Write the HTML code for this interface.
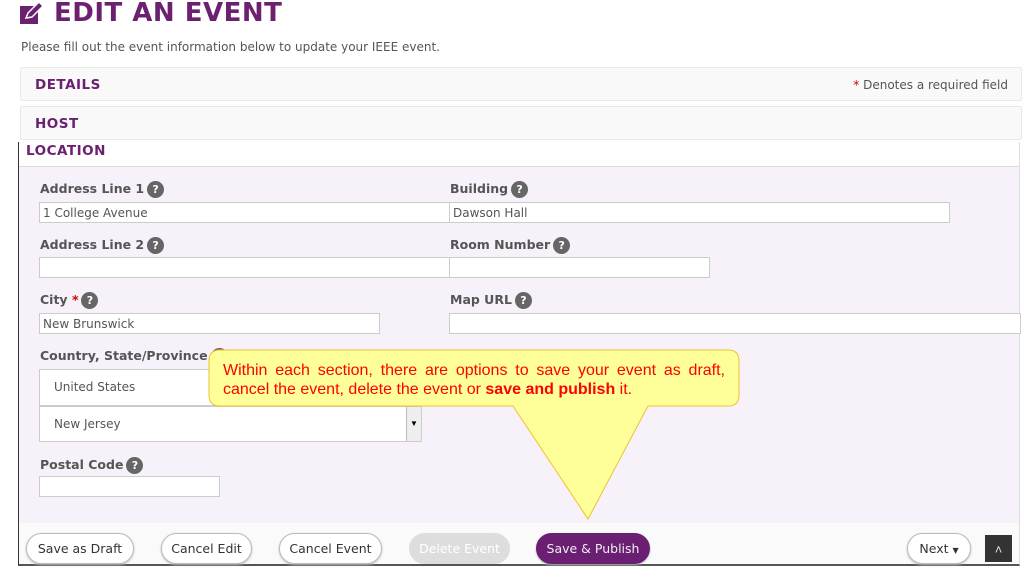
<!DOCTYPE html>
<html><head><style>
*{box-sizing:border-box;margin:0;padding:0}
body{width:1024px;height:573px;background:#fff;font-family:"Liberation Sans","DejaVu Sans",sans-serif;position:relative;overflow:hidden;color:#555}
.a{position:absolute}
.lbl{position:absolute;font-family:"DejaVu Sans",sans-serif;font-weight:bold;font-size:12.5px;color:#555;white-space:nowrap}
.q{display:inline-block;width:17px;height:17px;border-radius:50%;background:#666;color:#fff;font-size:11px;text-align:center;line-height:17px;vertical-align:middle;margin-left:3px}
.in{position:absolute;background:#fff;border:1px solid #ccc;height:21px;font-family:"DejaVu Sans",sans-serif;font-size:12px;color:#555;padding:3px 3px;white-space:nowrap}
.btn{position:absolute;top:533px;height:31px;border:1px solid #bbb;border-radius:16px;background:#fff;font-family:"DejaVu Sans",sans-serif;font-size:12.5px;color:#333;text-align:center;line-height:29px;box-shadow:0 1px 2px #bbb}
.panel{position:absolute;left:20px;width:1002px;background:#f9f9f9;border:1px solid #e8e8e8;border-radius:2px}
.ph{position:absolute;font-family:"DejaVu Sans",sans-serif;font-weight:bold;font-size:13.5px;color:#6b2070;letter-spacing:.5px}
</style></head><body>
<svg class="a" style="left:20px;top:2px" width="24" height="22" viewBox="0 0 24 22"><rect x="0" y="4" width="18" height="18" fill="#6b2070"/><path d="M6 16 L8 11 L19 0 L23 4 L12 15 Z" fill="#6b2070" stroke="#fff" stroke-width="1.5"/></svg>
<div class="a" style="left:54px;top:-2px;font-family:'DejaVu Sans',sans-serif;font-weight:bold;font-size:26px;color:#6b2070;letter-spacing:.5px">EDIT AN EVENT</div>
<div class="a" style="left:21px;top:40px;font-family:'DejaVu Sans',sans-serif;font-size:12px;color:#555">Please fill out the event information below to update your IEEE event.</div>
<div class="panel" style="top:67px;height:34px"></div>
<div class="ph" style="left:35px;top:77px">DETAILS</div>
<div class="a" style="right:16px;top:78px;font-family:'DejaVu Sans',sans-serif;font-size:12px;color:#555"><span style="color:#c00">*</span> Denotes a required field</div>
<div class="panel" style="top:106px;height:34px"></div>
<div class="ph" style="left:35px;top:116px">HOST</div>
<div class="a" style="left:18px;top:142px;width:1002px;height:424px;border-left:1px solid #333;border-bottom:2px solid #555;border-right:1px solid #ddd"></div>
<div class="a" style="left:19px;top:142px;width:1000px;height:25px;background:#fff;border-bottom:1px solid #ddd"></div>
<div class="ph" style="left:26px;top:143px">LOCATION</div>
<div class="a" style="left:19px;top:167px;width:1000px;height:356px;background:#f7f2f9"></div>
<div class="a" style="left:19px;top:523px;width:1000px;height:41px;background:#fafafa"></div>

<div class="lbl" style="left:40px;top:181px">Address Line 1<span class="q">?</span></div>
<div class="in" style="left:39px;top:202px;width:411px">1 College Avenue</div>
<div class="lbl" style="left:450px;top:181px">Building<span class="q">?</span></div>
<div class="in" style="left:449px;top:202px;width:501px">Dawson Hall</div>
<div class="lbl" style="left:40px;top:237px">Address Line 2<span class="q">?</span></div>
<div class="in" style="left:39px;top:257px;width:411px"></div>
<div class="lbl" style="left:450px;top:237px">Room Number<span class="q">?</span></div>
<div class="in" style="left:449px;top:257px;width:261px"></div>
<div class="lbl" style="left:40px;top:292px">City <span style="color:#c00">*</span><span class="q">?</span></div>
<div class="in" style="left:39px;top:313px;width:341px">New Brunswick</div>
<div class="lbl" style="left:450px;top:292px">Map URL<span class="q">?</span></div>
<div class="in" style="left:449px;top:313px;width:572px"></div>
<div class="lbl" style="left:40px;top:348px">Country, State/Province<span class="q">?</span></div>
<div class="in" style="left:39px;top:369px;width:383px;height:37px;padding:10px 14px">United States</div>
<div class="in" style="left:39px;top:406px;width:383px;height:36px;padding:10px 14px">New Jersey</div>
<div class="a" style="left:406px;top:407px;width:15px;height:34px;background:#eee;border-left:1px solid #bbb;font-size:8px;text-align:center;line-height:34px;color:#000">▼</div>
<div class="lbl" style="left:40px;top:457px">Postal Code<span class="q">?</span></div>
<div class="in" style="left:39px;top:476px;width:181px"></div>

<div class="btn" style="left:26px;width:108px">Save as Draft</div>
<div class="btn" style="left:161px;width:91px">Cancel Edit</div>
<div class="btn" style="left:279px;width:103px">Cancel Event</div>
<div class="btn" style="left:409px;width:101px;background:#ddd;border-color:#ddd;color:#fff;box-shadow:none">Delete Event</div>
<div class="btn" style="left:536px;width:114px;background:#6b1f72;border-color:#6b1f72;color:#eee">Save &amp; Publish</div>
<div class="btn" style="left:907px;width:64px">Next <span style="font-size:8px">▼</span></div>
<div class="a" style="left:985px;top:535px;width:27px;height:27px;background:#333;color:#ddd;text-align:center;line-height:30px;font-size:13px">˄</div>

<svg class="a" style="left:208px;top:349px" width="532" height="172"><path d="M10 1 H520 Q531 1 531 12 V46 Q531 57 520 57 H440 L380 170 L305 57 H12 Q1 57 1 46 V12 Q1 1 12 1 Z" fill="#ffff99" stroke="#f0c030" stroke-width="1"/></svg>
<div class="a" style="left:223px;top:361px;width:502px;font-size:16px;color:#f00;line-height:19px;text-align:justify;text-align-last:left">Within each section, there are options to save your event as draft, cancel the event, delete the event or <b>save and publish</b> it.</div>
</body></html>
